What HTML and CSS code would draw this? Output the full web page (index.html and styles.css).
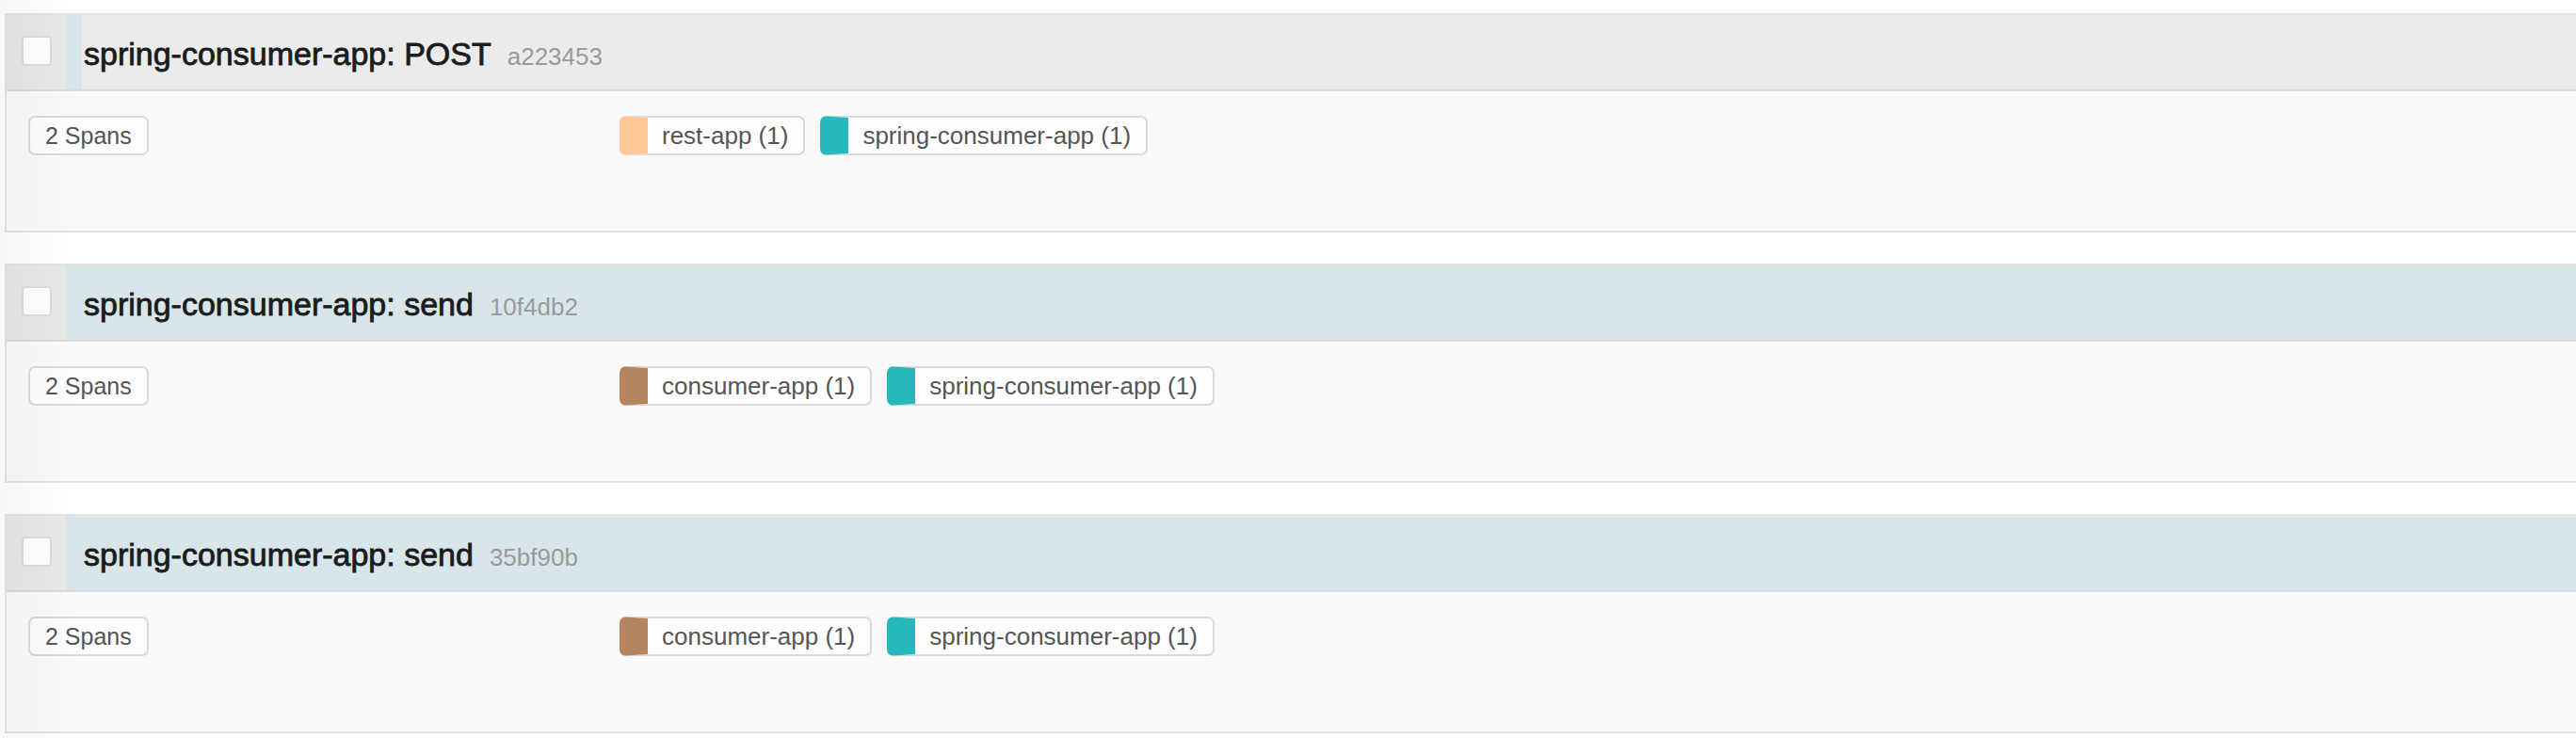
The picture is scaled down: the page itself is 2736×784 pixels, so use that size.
FILE: index.html
```html
<!DOCTYPE html>
<html lang="en">
<head>
<meta charset="utf-8">
<title>Trace results</title>
<link rel="stylesheet" href="styles.css">
</head>
<body>
<div class="results">
  <div class="card">
    <div class="card-header">
      <div class="check-col"><span class="checkbox"></span></div>
      <div class="header-main">
        <div class="duration-bar" style="width: 0.64%"></div>
        <span class="title">spring-consumer-app: POST</span>
        <span class="trace-id">a223453</span>
      </div>
    </div>
    <div class="card-body">
      <div class="count-col"><span class="tag">2 Spans</span></div>
      <div class="services">
        <span class="tag service svc-rest">rest-app (1)</span>
        <span class="tag service svc-spring">spring-consumer-app (1)</span>
      </div>
    </div>
  </div>

  <div class="card">
    <div class="card-header">
      <div class="check-col"><span class="checkbox"></span></div>
      <div class="header-main">
        <div class="duration-bar" style="width: 100%"></div>
        <span class="title">spring-consumer-app: send</span>
        <span class="trace-id">10f4db2</span>
      </div>
    </div>
    <div class="card-body">
      <div class="count-col"><span class="tag">2 Spans</span></div>
      <div class="services">
        <span class="tag service svc-consumer">consumer-app (1)</span>
        <span class="tag service svc-spring">spring-consumer-app (1)</span>
      </div>
    </div>
  </div>

  <div class="card">
    <div class="card-header">
      <div class="check-col"><span class="checkbox"></span></div>
      <div class="header-main">
        <div class="duration-bar" style="width: 100%"></div>
        <span class="title">spring-consumer-app: send</span>
        <span class="trace-id">35bf90b</span>
      </div>
    </div>
    <div class="card-body">
      <div class="count-col"><span class="tag">2 Spans</span></div>
      <div class="services">
        <span class="tag service svc-consumer">consumer-app (1)</span>
        <span class="tag service svc-spring">spring-consumer-app (1)</span>
      </div>
    </div>
  </div>
</div>
<div class="page-shade"></div>
</body>
</html>
```
FILE: styles.css
```css
html, body {
  margin: 0;
  padding: 0;
  background: #ffffff;
  overflow: hidden;
}

body {
  font-family: "Liberation Sans", Arial, sans-serif;
  color: #222;
}

.results {
  display: flex;
  flex-direction: column;
  gap: 33px;
  padding: 14px 0 0 5px;
  margin-right: -10px;
}

.card {
  border: 2px solid #e3e3e3;
  border-right: none;
  background: #fafafa;
}

.card-header {
  display: flex;
  height: 79px;
  border-bottom: 2px solid #dcdcdc;
}

.check-col {
  width: 63px;
  flex: none;
  background: #e8e8e8;
  display: flex;
  align-items: center;
  justify-content: center;
  padding-bottom: 3px;
  box-sizing: border-box;
}

.checkbox {
  width: 32px;
  height: 32px;
  box-sizing: border-box;
  border: 2px solid #dcdcdc;
  border-radius: 4px;
  background: #ffffff;
}

.header-main {
  flex: 1;
  position: relative;
  background: #ebebeb;
  display: flex;
  align-items: baseline;
  padding: 21px 0 0 19px;
  box-sizing: border-box;
}

.duration-bar {
  position: absolute;
  left: 0;
  top: 0;
  bottom: 0;
  background: #d8e6ea;
}

.title {
  position: relative;
  font-size: 34px;
  line-height: 40px;
  color: #1c1c1c;
  -webkit-text-stroke: 0.85px #1c1c1c;
}

.trace-id {
  position: relative;
  font-size: 26px;
  color: #9a9a9a;
  margin-left: 17px;
}

.card-body {
  display: flex;
  height: 148px;
  padding: 26px 0 0 23px;
  box-sizing: border-box;
  align-items: flex-start;
}

.count-col {
  width: 628px;
  flex: none;
}

.services {
  display: flex;
  gap: 16px;
}

.tag {
  display: inline-block;
  height: 42px;
  line-height: 38px;
  box-sizing: border-box;
  padding: 0 16px;
  border: 2px solid #dadada;
  border-radius: 7px;
  background: #fdfdfd;
  font-size: 25px;
  color: #555;
  white-space: nowrap;
}

.service {
  font-size: 26px;
  padding-left: 15px;
  border-left-width: 30px;
}

.svc-rest { border-left-color: #ffc896; }
.svc-spring { border-left-color: #26b8bc; }
.svc-consumer { border-left-color: #b5855e; }

.page-shade {
  position: fixed;
  left: 0;
  top: 0;
  bottom: 0;
  width: 80px;
  pointer-events: none;
  background: linear-gradient(to right, rgba(0, 0, 0, 0.03), rgba(0, 0, 0, 0));
}
```
